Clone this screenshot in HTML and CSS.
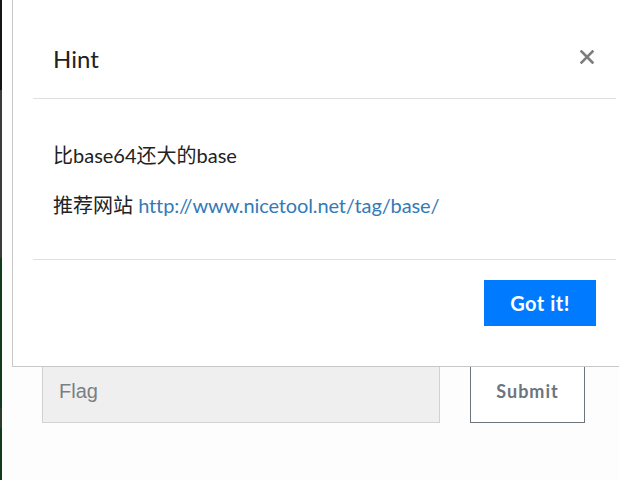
FILE: index.html
```html
<!DOCTYPE html>
<html lang="zh">
<head>
<meta charset="utf-8">
<title>Hint</title>
<link rel="stylesheet" href="styles.css">
</head>
<body>
<div class="page">
  <div class="strip">
    <span class="seg seg-black"></span>
    <span class="seg seg-gray"></span>
    <span class="seg seg-green"></span>
    <span class="seg seg-mix"></span>
    <span class="seg seg-green2"></span>
  </div>
  <div class="main">
    <form class="flag-form">
      <input class="flag-input" type="text" placeholder="Flag">
      <button class="submit-btn" type="button">Submit</button>
    </form>
    <div class="modal">
      <div class="modal-header">
        <h5 class="modal-title">Hint</h5>
        <button class="close" type="button" aria-label="Close">
          <svg width="14" height="14" viewBox="0 0 14 14"><path d="M1.5 1.5 L12.5 12.5 M12.5 1.5 L1.5 12.5" stroke="#7d7d7d" stroke-width="2.6" stroke-linecap="square"/></svg>
        </button>
      </div>
      <div class="modal-body">
        <p>比base64还大的base</p>
        <p class="last">推荐网站 <a href="#">http://www.nicetool.net/tag/base/</a></p>
      </div>
      <div class="modal-footer">
        <button class="got-it" type="button">Got it!</button>
      </div>
    </div>
  </div>
</div>
</body>
</html>
```
FILE: styles.css
```css
html, body {
  margin: 0;
  padding: 0;
}
body {
  background: #fdfdfd;
  font-family: Lato, "Noto Sans CJK SC", sans-serif;
}
.page {
  display: flex;
  width: 619px;
  height: 480px;
  overflow: hidden;
}
.strip {
  width: 2px;
  display: flex;
  flex-direction: column;
  flex: none;
}
.seg { display: block; }
.seg-black { height: 90px; background: #141414; }
.seg-gray { height: 168px; background: #3a3a3a; }
.seg-green { height: 150px; background: #123a1c; }
.seg-mix { height: 20px; background: #2f3a30; }
.seg-green2 { flex: 1; background: #123a1c; }
.main {
  position: relative;
  flex: 1;
}
.flag-form {
  display: flex;
  align-items: flex-end;
  padding: 359px 0 0 40px;
  margin: 0;
}
.flag-input {
  box-sizing: border-box;
  width: 398px;
  height: 64px;
  border: 1px solid #d2d2d2;
  background: #efefef;
  padding: 0 16px;
  font-family: "Liberation Sans", Arial, sans-serif;
  font-size: 20px;
  color: #555;
  margin: 0;
}
.flag-input::placeholder { color: #7a7f85; }
.submit-btn {
  box-sizing: border-box;
  margin-left: 30px;
  width: 115px;
  height: 64px;
  border: 1px solid #6c757d;
  background: #fff;
  color: #6c757d;
  font-family: Lato, sans-serif;
  font-weight: 700;
  font-size: 18px;
  letter-spacing: 1px;
  padding: 0;
}
.modal {
  position: absolute;
  left: 10px;
  top: -1px;
  width: 623px;
  background: #fff;
  border: 1px solid #c8c8c8;
}
.modal-header {
  margin: 0 20px;
  padding: 41px 20px 21px;
  border-bottom: 1px solid #e0e0e4;
  display: flex;
  align-items: flex-start;
  justify-content: space-between;
}
.modal-title {
  margin: 0;
  font-size: 24px;
  font-weight: 400;
  line-height: 36px;
  color: #222;
}
.close {
  border: 0;
  background: none;
  padding: 0;
  margin: 9px 2px 0 0;
  width: 14px;
  height: 14px;
  display: flex;
}
.modal-body {
  margin: 0 20px;
  padding: 41px 20px 39px;
  font-size: 20px;
  color: #222;
}
.modal-body p {
  margin: 0 0 20px;
  line-height: 30px;
}
.modal-body p.last { margin-bottom: 0; }
.modal-body a {
  color: #337ab7;
  text-decoration: none;
  letter-spacing: -0.12px;
}
.modal-footer {
  margin: 0 20px;
  padding: 20px 20px 40px;
  border-top: 1px solid #e0e0e0;
  display: flex;
  justify-content: flex-end;
}
.got-it {
  width: 112px;
  height: 46px;
  border: 0;
  background: #007bff;
  color: #fff;
  font-family: Lato, sans-serif;
  font-weight: 700;
  font-size: 20px;
  letter-spacing: 0.5px;
  padding: 0;
}
```
